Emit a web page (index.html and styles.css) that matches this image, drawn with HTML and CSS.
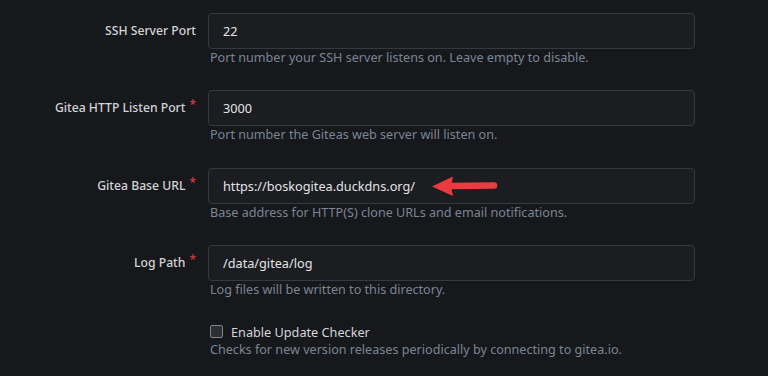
FILE: index.html
```html
<!DOCTYPE html>
<html lang="en">
<head>
    <meta charset="UTF-8">
    <meta name="viewport" content="width=device-width, initial-scale=1.0">
    <title>Gitea Installation</title>
    <link rel="stylesheet" href="styles.css">
</head>
<body>
    <form class="settings">
        <div class="field">
            <label for="sshPort">SSH Server Port</label>
            <div class="control">
                <input type="text" id="sshPort" value="22">
                <span class="help">Port number your SSH server listens on. Leave empty to disable.</span>
            </div>
        </div>

        <div class="field required">
            <label for="httpPort">Gitea HTTP Listen Port</label>
            <div class="control">
                <input type="text" id="httpPort" value="3000">
                <span class="help">Port number the Giteas web server will listen on.</span>
            </div>
        </div>

        <div class="field required">
            <label for="appUrl">Gitea Base URL</label>
            <div class="control">
                <input type="text" id="appUrl" value="https://boskogitea.duckdns.org/">
                <!-- annotation arrow -->
                <svg class="arrow" width="70" height="24" viewBox="0 0 70 24">
                    <path d="M1 12.5 L22 2.5 Q19 12.5 22 22 Z" fill="#ec3a3f"/>
                    <line x1="20" y1="12" x2="63" y2="11.5" stroke="#ec3a3f" stroke-width="6.5" stroke-linecap="round"/>
                </svg>
                <span class="help">Base address for HTTP(S) clone URLs and email notifications.</span>
            </div>
        </div>

        <div class="field required">
            <label for="logPath">Log Path</label>
            <div class="control">
                <input type="text" id="logPath" value="/data/gitea/log">
                <span class="help">Log files will be written to this directory.</span>
            </div>
        </div>

        <div class="field">
            <span class="spacer"></span>
            <div class="control">
                <label class="checkbox">
                    <input type="checkbox" id="updateChecker">
                    <span class="box"></span>
                    Enable Update Checker
                </label>
                <span class="help">Checks for new version releases periodically by connecting to gitea.io.</span>
            </div>
        </div>
    </form>
</body>
</html>
```

FILE: styles.css
```css
body {
    margin: 0;
    background-color: #16181c;
    color: #d4d6d9;
    font-family: "Noto Sans", sans-serif;
}
.settings {
    padding-top: 13px;
}
.field {
    display: flex;
    align-items: flex-start;
    gap: 12px;
    margin-bottom: 23.4px;
}
.field > label,
.spacer {
    width: 196px;
    flex-shrink: 0;
    text-align: right;
    font-size: 12.2px;
    font-weight: 500;
    line-height: 36px;
    color: #d2d4d7;
}
.field.required > label::after {
    content: "*";
    color: #db3a3a;
    margin-left: 4px;
    font-size: 12px;
    vertical-align: top;
    line-height: 30px;
}
.control {
    position: relative;
    width: 487px;
}
.control input[type="text"] {
    display: block;
    box-sizing: border-box;
    width: 100%;
    height: 36px;
    padding: 0 14px;
    background-color: #1b1d21;
    border: 1px solid #363940;
    border-radius: 4px;
    color: #e2e4e7;
    font-family: inherit;
    font-size: 12.7px;
    outline: none;
}
.help {
    display: block;
    font-size: 12.6px;
    line-height: 18px;
    color: #7b8594;
    padding-left: 2px;
}
.arrow {
    position: absolute;
    left: 223px;
    top: 6px;
}
.checkbox {
    display: flex;
    align-items: center;
    gap: 8px;
    height: 18px;
    padding-left: 2px;
    font-size: 12.7px;
    color: #d4d6d9;
}
.checkbox input {
    display: none;
}
.checkbox .box {
    width: 11px;
    height: 11px;
    border: 1px solid #80838b;
    border-radius: 2px;
    background-color: #2c2e35;
}
```
